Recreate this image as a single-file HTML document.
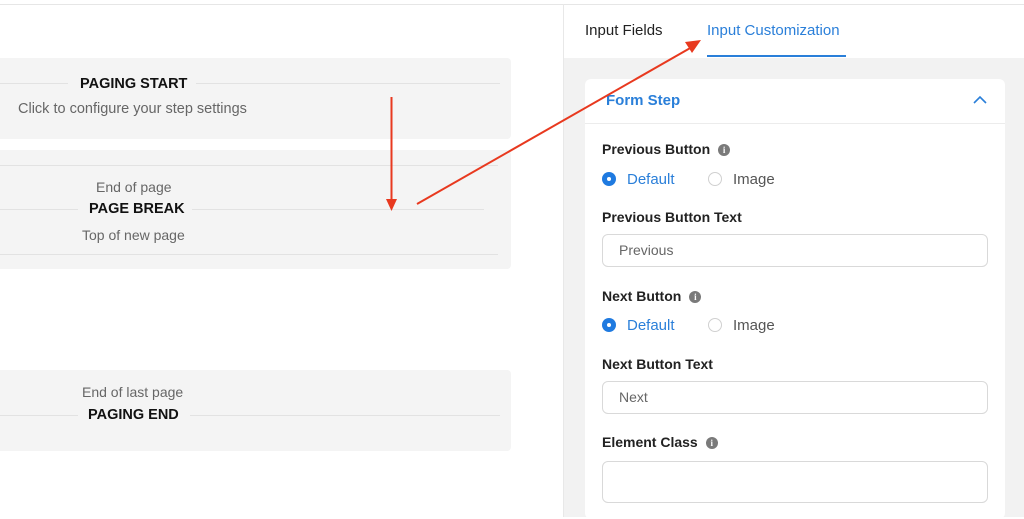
<!DOCTYPE html><html><head><style>
body{margin:0;width:1024px;height:517px;position:relative;overflow:hidden;background:#fff;font-family:"Liberation Sans",Arial,sans-serif}
.a{position:absolute}
.blk{position:absolute;left:0;width:511px;background:#f4f4f4;border-radius:0 4px 4px 0}
.hl{position:absolute;height:1px;background:#e2e2e2}
.t{position:absolute;white-space:nowrap}
.b{font-weight:bold;font-size:14.5px;color:#111}
.g{font-size:14px;color:#666}
.lab{position:absolute;left:602px;font-size:14px;color:#222;font-weight:bold}
.info{display:inline-block;width:12px;height:12px;border-radius:50%;background:#7a7a7a;color:#fff;font-size:9px;font-weight:bold;text-align:center;line-height:12px;vertical-align:1px;margin-left:8px;font-family:"Liberation Serif",serif}
.inp{position:absolute;left:602px;width:386px;border:1px solid #d9d9d9;border-radius:6px;background:#fff;font-size:14px;color:#666;box-sizing:border-box;padding-left:16px}
.rad{position:absolute;width:14px;height:14px;border-radius:50%;box-sizing:border-box}
.on{background:#1f7ae0}
.on:after{content:"";position:absolute;left:5px;top:5px;width:4px;height:4px;border-radius:50%;background:#fff}
.off{border:1px solid #d0d0d0;background:#fff}
.r{font-size:15px}
</style></head><body>
<div class="a" style="left:0;top:4px;width:1024px;height:1px;background:#e6e6e6"></div>
<div class="a" style="left:563px;top:4px;width:1px;height:513px;background:#e8e8e8"></div>
<div class="a" style="left:564px;top:58px;width:460px;height:459px;background:#f2f2f2"></div>
<div class="t" style="left:585px;top:22px;font-size:15px;color:#222">Input Fields</div>
<div class="t" style="left:707px;top:22px;font-size:15px;color:#2a7fd9">Input Customization</div>
<div class="a" style="left:707px;top:55px;width:139px;height:2px;background:#2a7fd9"></div>
<div class="a" style="left:585px;top:79px;width:420px;height:440px;background:#fff;border-radius:6px"></div>
<div class="a" style="left:585px;top:123px;width:420px;height:1px;background:#ececec"></div>
<div class="t" style="left:606px;top:92px;font-size:15px;color:#2a7fd9;font-weight:bold">Form Step</div>
<svg class="a" style="left:972px;top:94px" width="16" height="12"><path d="M2 9 L8 3 L14 9" fill="none" stroke="#2a7fd9" stroke-width="1.6"/></svg>
<div class="lab" style="top:141px">Previous Button<span class="info">i</span></div>
<div class="rad on" style="left:602px;top:172px"></div><div class="t r" style="left:627px;top:171px;color:#2a7fd9">Default</div>
<div class="rad off" style="left:708px;top:172px"></div><div class="t r" style="left:733px;top:171px;color:#555">Image</div>
<div class="lab" style="top:209px">Previous Button Text</div>
<div class="inp" style="top:234px;height:33px;line-height:31px">Previous</div>
<div class="lab" style="top:288px">Next Button<span class="info">i</span></div>
<div class="rad on" style="left:602px;top:318px"></div><div class="t r" style="left:627px;top:317px;color:#2a7fd9">Default</div>
<div class="rad off" style="left:708px;top:318px"></div><div class="t r" style="left:733px;top:317px;color:#555">Image</div>
<div class="lab" style="top:356px">Next Button Text</div>
<div class="inp" style="top:381px;height:33px;line-height:31px">Next</div>
<div class="lab" style="top:434px">Element Class<span class="info">i</span></div>
<div class="inp" style="top:461px;height:42px"></div>

<div class="blk" style="top:58px;height:81px"></div>
<div class="hl" style="left:0;top:83px;width:68px"></div><div class="hl" style="left:196px;top:83px;width:304px"></div>
<div class="t b" style="left:80px;top:76px">PAGING START</div>
<div class="t g" style="left:18px;top:101px;font-size:14.5px">Click to configure your step settings</div>
<div class="blk" style="top:150px;height:119px"></div>
<div class="hl" style="left:0;top:165px;width:498px"></div>
<div class="hl" style="left:0;top:209px;width:78px"></div><div class="hl" style="left:192px;top:209px;width:292px"></div>
<div class="hl" style="left:0;top:254px;width:498px"></div>
<div class="t g" style="left:96px;top:179px">End of page</div>
<div class="t b" style="left:89px;top:201px">PAGE BREAK</div>
<div class="t g" style="left:82px;top:227px">Top of new page</div>
<div class="blk" style="top:370px;height:81px"></div>
<div class="hl" style="left:0;top:415px;width:78px"></div><div class="hl" style="left:190px;top:415px;width:310px"></div>
<div class="t g" style="left:82px;top:384px">End of last page</div>
<div class="t b" style="left:88px;top:407px">PAGING END</div>

<svg class="a" style="left:0;top:0" width="1024" height="517">
<line x1="391.5" y1="97" x2="391.5" y2="200" stroke="#e8391f" stroke-width="2"/>
<path d="M386 199 L397 199 L391.5 211Z" fill="#e8391f"/>
<line x1="417" y1="204" x2="692" y2="47" stroke="#e8391f" stroke-width="2"/>
<path d="M701 40 L685 42 L692 53Z" fill="#e8391f"/>
</svg>
</body></html>
